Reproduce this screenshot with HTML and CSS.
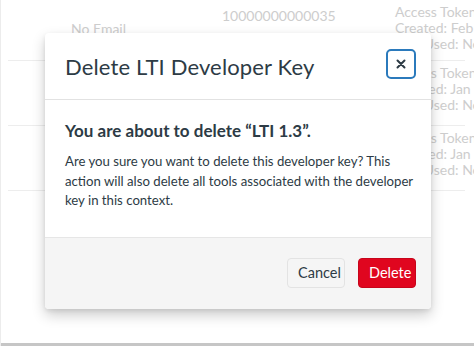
FILE: index.html
```html
<!DOCTYPE html>
<html>
<head>
<meta charset="utf-8">
<link rel="stylesheet" href="styles.css">
</head>
<body>
<div class="page">
  <div class="table">
    <div class="row">
      <div class="cell c-email"><span class="email">No Email</span></div>
      <div class="cell c-id">10000000000035</div>
      <div class="cell c-token">
        <div>Access Token</div>
        <div>Created: Feb 1, 2019</div>
        <div>Last Used: Never</div>
      </div>
    </div>
    <div class="row">
      <div class="cell c-email"></div>
      <div class="cell c-id"></div>
      <div class="cell c-token">
        <div>Access Token</div>
        <div>Created: Jan 3, 2019</div>
        <div>Last Used: Never</div>
      </div>
    </div>
    <div class="row">
      <div class="cell c-email"></div>
      <div class="cell c-id"></div>
      <div class="cell c-token">
        <div>Access Token</div>
        <div>Created: Jan 3, 2019</div>
        <div>Last Used: Never</div>
      </div>
    </div>
  </div>
  <div class="bottom-bar"></div>

  <div class="modal" role="dialog">
    <div class="modal-header">
      <h2 class="modal-title">Delete LTI Developer Key</h2>
      <button class="close-btn" aria-label="Close">
        <svg width="10" height="10" viewBox="0 0 10 10"><path d="M1.5 1.5 L8.5 8.5 M8.5 1.5 L1.5 8.5" stroke="#2d3b45" stroke-width="2" stroke-linecap="round"/></svg>
      </button>
    </div>
    <div class="modal-body">
      <h3 class="body-title">You are about to delete “LTI 1.3”.</h3>
      <p class="body-text">Are you sure you want to delete this developer key? This action will also delete all tools associated with the developer key in this context.</p>
    </div>
    <div class="modal-footer">
      <button class="btn btn-cancel">Cancel</button>
      <button class="btn btn-delete">Delete</button>
    </div>
  </div>
</div>
</body>
</html>
```

FILE: styles.css
```css
html, body {
  margin: 0;
  padding: 0;
}
body {
  font-family: Lato, "Noto Sans", "Liberation Sans", sans-serif;
  background: #ffffff;
  width: 474px;
  height: 346px;
  overflow: hidden;
}
.page {
  position: relative;
  width: 474px;
  height: 346px;
  overflow: hidden;
  border-left: 1px solid #ececec;
  box-sizing: border-box;
  display: flex;
  flex-direction: column;
}
.table {
  margin: -4px 0 0 7px;
  width: 457px;
  flex: 1;
}
.row {
  display: flex;
  height: 64px;
  border-bottom: 1px solid #ededed;
  color: #cdcdcd;
  font-size: 14px;
  line-height: 16px;
}
.row:nth-child(n+2) .c-token {
  padding-top: 4px;
}
.cell {
  white-space: nowrap;
  flex: none;
  box-sizing: border-box;
}
.c-email {
  width: 214px;
  padding-left: 63px;
}
.email {
  display: block;
  margin-top: 25px;
}
.c-id {
  width: 173px;
  padding-top: 12px;
}
.c-token {
  padding-top: 8px;
}
.bottom-bar {
  height: 3px;
  background: #c6c6c6;
  margin-left: -1px;
}

.modal {
  position: absolute;
  left: 44px;
  top: 33px;
  width: 386px;
  background: #ffffff;
  border-radius: 4px;
  box-shadow: 0 6px 14px rgba(0,0,0,0.20), 0 2px 4px rgba(0,0,0,0.08);
  display: flex;
  flex-direction: column;
  overflow: hidden;
}
.modal-header {
  height: 67px;
  box-sizing: border-box;
  border-bottom: 1px solid #e2e2e2;
  display: flex;
  align-items: center;
  justify-content: space-between;
  padding: 0 15px 4px 20px;
}
.modal-title {
  margin: 0;
  font-size: 22px;
  font-weight: 400;
  color: #2d3b45;
  letter-spacing: 0.15px;
  padding-top: 4px;
}
.close-btn {
  width: 30px;
  height: 30px;
  border: 2px solid #2b7abc;
  border-radius: 5px;
  background: #ffffff;
  display: flex;
  align-items: center;
  justify-content: center;
  padding: 0;
}
.modal-body {
  height: 137px;
  box-sizing: border-box;
  padding: 20px 15px 0 20px;
  color: #2d3b45;
}
.body-title {
  margin: 0;
  font-size: 17px;
  font-weight: 700;
  line-height: 22px;
}
.body-text {
  margin: 10px 0 0 0;
  font-size: 13.2px;
  line-height: 19.5px;
  color: #2d3b45;
}
.modal-footer {
  height: 72px;
  box-sizing: border-box;
  background: #f5f5f5;
  border-top: 1px solid #e6e6e6;
  display: flex;
  justify-content: flex-end;
  align-items: center;
  gap: 13px;
  padding: 0 15px 2px 0;
}
.btn {
  height: 30px;
  padding: 0 10px;
  font-family: Lato, "Noto Sans", "Liberation Sans", sans-serif;
  font-size: 14.5px;
  border-radius: 4px;
  cursor: pointer;
}
.btn-cancel {
  background: #f5f5f5;
  border: 1px solid #e3e3e3;
  color: #2d3b45;
  width: 58px;
}
.btn-delete {
  background: #e0061f;
  border: 1px solid #c7051b;
  color: #ffffff;
  width: 58px;
}
```
